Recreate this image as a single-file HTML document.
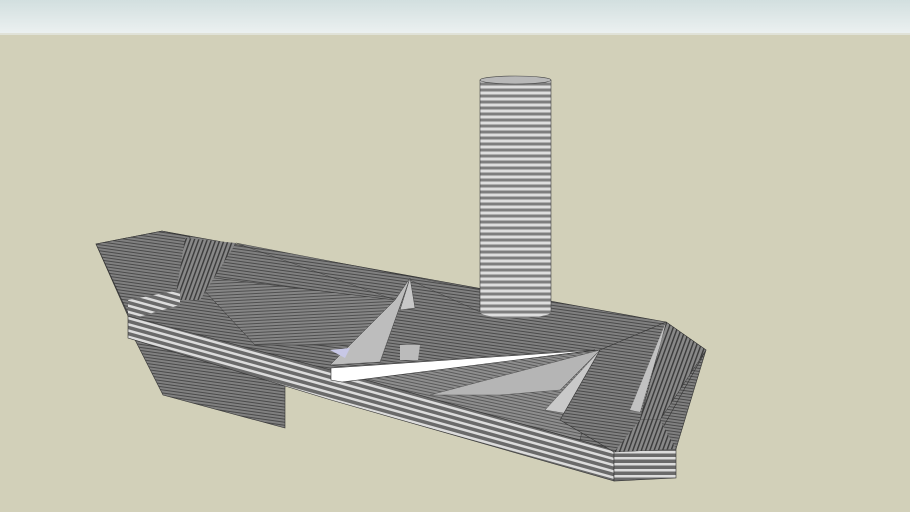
<!DOCTYPE html>
<html><head><style>
html,body{margin:0;padding:0;width:910px;height:512px;overflow:hidden;background:#d2d0b9;}
</style></head><body>
<svg width="910" height="512" viewBox="0 0 910 512" xmlns="http://www.w3.org/2000/svg">
<defs>
<linearGradient id="sky" x1="0" y1="0" x2="0" y2="1"><stop offset="0" stop-color="#d2dfdf"/><stop offset="1" stop-color="#ecf1f1"/></linearGradient>
<pattern id="dk" width="6" height="3" patternUnits="userSpaceOnUse" patternTransform="rotate(8)"><rect width="6" height="3" fill="#808080"/><rect width="6" height="1" fill="#4a4a4a"/></pattern>
<pattern id="dk2" width="6" height="3" patternUnits="userSpaceOnUse" patternTransform="rotate(-3)"><rect width="6" height="3" fill="#858585"/><rect width="6" height="1" fill="#505050"/></pattern>
<pattern id="md" width="6" height="3" patternUnits="userSpaceOnUse" patternTransform="rotate(12)"><rect width="6" height="3" fill="#8e8e8e"/><rect width="6" height="1" fill="#5a5a5a"/></pattern>
<pattern id="vt" width="4" height="6" patternUnits="userSpaceOnUse" patternTransform="rotate(20)"><rect width="4" height="6" fill="#888"/><rect width="1.4" height="6" fill="#3a3a3a"/></pattern>
<pattern id="band" width="8" height="6" patternUnits="userSpaceOnUse" patternTransform="rotate(15.5)"><rect width="8" height="6" fill="#6a6a6a"/><rect y="1" width="8" height="2.5" fill="#dcdcdc"/></pattern>
<pattern id="bandh" width="8" height="6" patternUnits="userSpaceOnUse"><rect width="8" height="6" fill="#6a6a6a"/><rect y="1" width="8" height="2.5" fill="#dcdcdc"/></pattern>
<pattern id="tw" width="8" height="6" patternUnits="userSpaceOnUse"><rect width="8" height="6" fill="#7e7e7e"/><rect y="1.5" width="8" height="3" fill="#dedede"/></pattern>
</defs>
<rect width="910" height="34" fill="url(#sky)"/>
<rect y="33" width="910" height="2" fill="#e0e2d8"/>
<!-- hanging block -->
<polygon points="130,330 163,395 285,428 285,385" fill="url(#dk)" stroke="#333" stroke-width="0.6"/>
<!-- base fill -->
<polygon points="128,316 96,244 162,231 666,322 706,350 676,449 614,452" fill="url(#dk)" stroke="#333" stroke-width="0.6"/>
<!-- main deck -->
<polygon points="190,275 395,300 360,345 255,345" fill="url(#dk2)" stroke="#333" stroke-width="0.5"/>
<polygon points="236,243 480,290 480,312 410,280 395,300" fill="url(#dk)" stroke="#333" stroke-width="0.4"/>
<!-- inner lower area -->
<polygon points="340,380 600,350 580,440 470,410" fill="url(#md)" stroke="#333" stroke-width="0.5"/>
<!-- left wedge -->
<polygon points="96,244 162,231 190,237 180,300 130,318" fill="url(#dk)" stroke="#333" stroke-width="0.6"/>
<polygon points="185,238 236,243 200,300 175,300" fill="url(#vt)"/>
<polygon points="128,300 180,290 180,305 128,320" fill="url(#band)"/>
<!-- spikes -->
<polygon points="410,278 395,300 330,365 380,362" fill="#bdbdbd" stroke="#444" stroke-width="0.5"/>
<polygon points="410,278 415,308 400,310" fill="#c8c8c8" stroke="#444" stroke-width="0.5"/>
<polygon points="400,345 420,345 418,360 400,360" fill="#bbb"/>
<polygon points="330,350 350,348 345,358" fill="#c8c8e6"/>
<!-- light triangles right -->
<polygon points="600,350 430,395 500,395 560,390" fill="#b5b5b5" stroke="#555" stroke-width="0.5"/>
<polygon points="600,350 545,410 575,415" fill="#c9c9c9" stroke="#555" stroke-width="0.5"/>
<!-- band -->
<polygon points="128,316 331,370 614,450 614,481 331,400 128,338" fill="url(#band)" stroke="#333" stroke-width="0.6"/>
<!-- right wing -->
<polygon points="600,350 666,322 706,350 656,440 614,452 560,420" fill="url(#dk)" stroke="#333" stroke-width="0.6"/>
<polygon points="666,322 706,350 660,420 640,420" fill="url(#vt)" stroke="#333" stroke-width="0.5"/>
<polygon points="666,322 630,410 640,412 660,345" fill="#c2c2c2"/>
<polygon points="614,452 676,449 676,478 614,481" fill="url(#bandh)" stroke="#333" stroke-width="0.6"/>
<polygon points="640,420 660,420 676,449 614,452" fill="url(#vt)"/>
<!-- white slab -->
<polygon points="331,368 595,350 342,382 331,380" fill="#fff" stroke="#333" stroke-width="0.6"/>
<!-- tower -->
<rect x="480" y="80" width="71" height="232" fill="url(#tw)"/>
<ellipse cx="515.5" cy="312" rx="35.5" ry="6" fill="url(#tw)"/>
<ellipse cx="515.5" cy="80" rx="35.5" ry="4" fill="#b8b8b8" stroke="#444" stroke-width="0.6"/>
<line x1="480" y1="80" x2="480" y2="312" stroke="#444" stroke-width="0.6"/>
<line x1="551" y1="80" x2="551" y2="312" stroke="#444" stroke-width="0.6"/>
</svg>
</body></html>
